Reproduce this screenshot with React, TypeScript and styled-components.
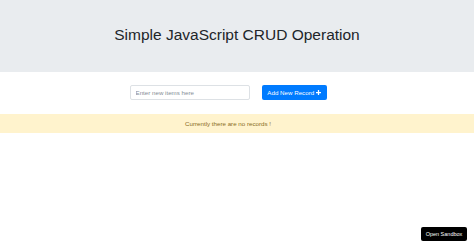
import { createGlobalStyle } from "styled-components";
import styled from "styled-components";

const Global = createGlobalStyle`
  html, body {
    margin: 0;
    padding: 0;
    background: #fff;
    font-family: "Liberation Sans", Arial, sans-serif;
    color: #212529;
  }
`;

const App = () => {
  return (
    <Page>
      <Global />
      <Jumbotron>
        <Title>Simple JavaScript CRUD Operation</Title>
      </Jumbotron>
      <Form>
        <Input placeholder="Enter new items here" />
        <AddButton>
          Add New Record
          <svg width="5" height="5" viewBox="0 0 8 8">
            <path d="M3 0h2v3h3v2H5v3H3V5H0V3h3z" fill="#fff" />
          </svg>
        </AddButton>
      </Form>
      <Alert>Currently there are no records !</Alert>
      <Sandbox>Open Sandbox</Sandbox>
    </Page>
  );
};

export default App;

const Page = styled.main`
  position: relative;
  width: 474px;
  height: 248px;
  overflow: hidden;
`;

const Jumbotron = styled.header`
  height: 72px;
  background: #e9ecef;

  display: flex;
  justify-content: center;
  align-items: center;
`;

const Title = styled.h1`
  margin: 0;
  font-size: 15.5px;
  font-weight: 400;
  color: #212529;
  padding-bottom: 2px;
`;

const Form = styled.div`
  display: flex;
  justify-content: center;
  gap: 12px;
  padding: 13px 18px 14px 0;
`;

const Input = styled.input`
  box-sizing: border-box;
  width: 120px;
  height: 15px;
  padding: 0 5px;
  border: 1px solid #dde1e5;
  border-radius: 2px;
  font-family: inherit;
  font-size: 6.2px;
  outline: none;

  &::placeholder {
    color: #868e96;
  }
`;

const AddButton = styled.button`
  box-sizing: border-box;
  height: 15px;
  width: 65px;
  padding: 0;
  border: none;
  border-radius: 2px;
  background: #007bff;
  color: #fff;
  font-family: inherit;
  font-size: 6.2px;

  display: flex;
  align-items: center;
  justify-content: center;
  gap: 1.5px;
`;

const Alert = styled.div`
  height: 19px;
  padding-right: 18px;
  background: #fff3cd;
  color: #8a6d1e;
  font-size: 6.2px;

  display: flex;
  align-items: center;
  justify-content: center;
`;

const Sandbox = styled.div`
  position: absolute;
  right: 7px;
  bottom: 7px;
  width: 46px;
  height: 14px;
  background: #000;
  border-radius: 2px;
  color: #fff;
  font-size: 5.5px;

  display: flex;
  align-items: center;
  justify-content: center;
`;
